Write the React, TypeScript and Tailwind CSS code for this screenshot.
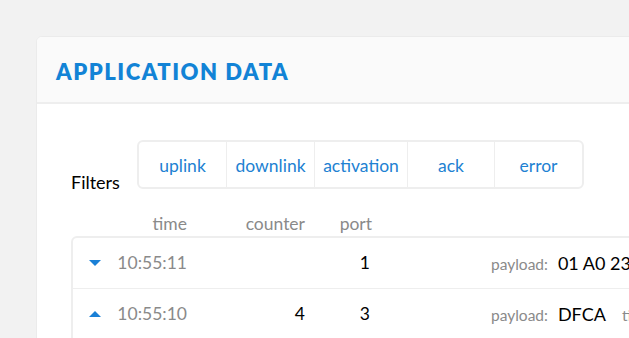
import React from "react";

const Down = () => (
  <svg width="12" height="6" viewBox="0 0 12 6" className="block">
    <polygon points="0,0 12,0 6,6" fill="#1a80d6" />
  </svg>
);
const Up = () => (
  <svg width="12" height="6" viewBox="0 0 12 6" className="block">
    <polygon points="0,6 12,6 6,0" fill="#1a80d6" />
  </svg>
);

const filters: { label: string; w: string }[] = [
  { label: "uplink", w: "w-[87px]" },
  { label: "downlink", w: "w-[88px]" },
  { label: "activation", w: "w-[93px]" },
  { label: "ack", w: "w-[87px]" },
  { label: "error", w: "w-[88px]" },
];

export default function App() {
  return (
    <div
      className="w-[629px] h-[338px] overflow-hidden bg-[#f2f2f2] pt-[36px] pl-[36px]"
      style={{ fontFamily: "Lato, 'Noto Sans', sans-serif" }}
    >
      <div className="w-[700px] h-[400px] bg-white border border-[#ebebeb] rounded-tl-[6px] overflow-hidden">
        <div className="h-[67px] bg-[#fafafa] border-b-2 border-[#eeeeee] pl-[19px] pt-[23px]">
          <div className="text-[22px] leading-[24px] font-extrabold tracking-[0.07em] text-[#1283d6]">
            APPLICATION DATA
          </div>
        </div>
        <div className="pl-[34px] pt-[36px]">
          <div className="flex items-end">
            <div className="w-[66px] text-[18px] leading-[20px] text-black translate-y-[3px]">
              Filters
            </div>
            <div className="flex h-[49px] border-2 border-[#eeeeee] rounded-[6px]">
              {filters.map((f, i) => (
                <div
                  key={f.label}
                  className={`${f.w} flex items-center justify-center pt-[3px] text-[17.5px] text-[#2181d2] ${
                    i > 0 ? "border-l border-[#eeeeee]" : ""
                  }`}
                >
                  {f.label}
                </div>
              ))}
            </div>
          </div>
          <div className="flex mt-[25px] h-[20px] items-center text-[17.5px] text-[#8a8a8a] leading-[20px]">
            <div className="w-[116px] text-right">time</div>
            <div className="w-[118px] text-right">counter</div>
            <div className="w-[67px] text-right">port</div>
          </div>
          <div className="mt-[2px] border-2 border-[#eeeeee] rounded-tl-[6px]">
            <div className="flex h-[51px] items-center border-b border-[#eeeeee]">
              <div className="w-[114px] flex items-center">
                <div className="pl-[16px]">
                  <Down />
                </div>
                <div className="flex-1 text-right text-[17.5px] text-[#8a8a8a]">10:55:11</div>
              </div>
              <div className="w-[118px] text-right text-[17.5px] text-black"></div>
              <div className="w-[65px] text-right text-[17.5px] text-black">1</div>
              <div className="ml-[121px] flex items-baseline whitespace-nowrap">
                <span className="text-[15.5px] text-[#8a8a8a]">payload:</span>
                <span className="ml-[10px] text-[18px] text-black">01 A0 23</span>
              </div>
            </div>
            <div className="flex h-[50px] items-center">
              <div className="w-[114px] flex items-center">
                <div className="pl-[16px]">
                  <Up />
                </div>
                <div className="flex-1 text-right text-[17.5px] text-[#8a8a8a]">10:55:10</div>
              </div>
              <div className="w-[118px] text-right text-[17.5px] text-black">4</div>
              <div className="w-[65px] text-right text-[17.5px] text-black">3</div>
              <div className="ml-[121px] flex items-baseline whitespace-nowrap">
                <span className="text-[15.5px] text-[#8a8a8a]">payload:</span>
                <span className="ml-[10px] text-[18px] text-black">DFCA</span>
                <span className="ml-[16px] text-[15.5px] text-[#8a8a8a]">time:</span>
              </div>
            </div>
          </div>
        </div>
      </div>
    </div>
  );
}
